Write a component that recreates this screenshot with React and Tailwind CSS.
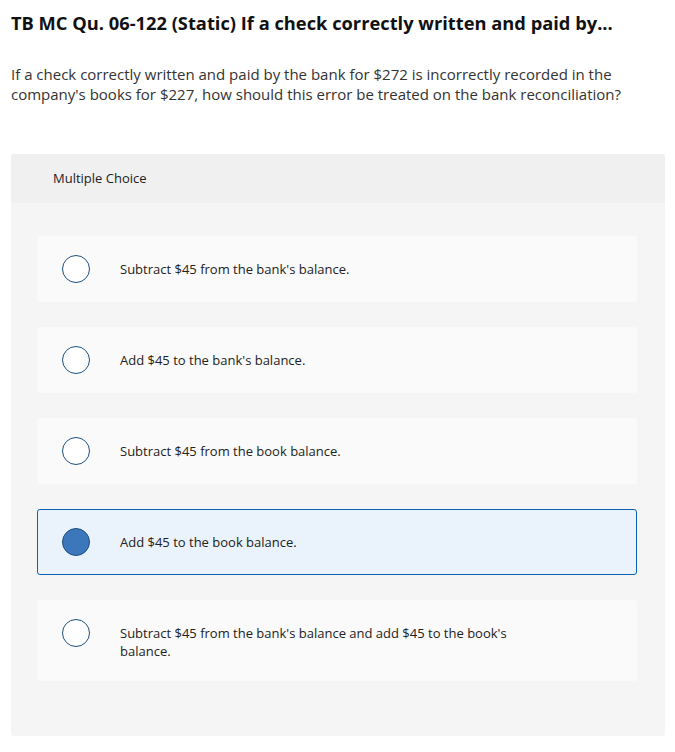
const choices = [
  "Subtract $45 from the bank's balance.",
  "Add $45 to the bank's balance.",
  'Subtract $45 from the book balance.',
  'Add $45 to the book balance.',
  "Subtract $45 from the bank's balance and add $45 to the book's balance.",
];

const selected = 3;

const Choice = ({ text, active }) => (
  <div
    className={`flex items-start rounded-[3px] border pl-[24px] pr-4 py-[18px] ${
      active ? 'border-[#0b62b5] bg-[#eaf2fb]' : 'border-transparent bg-[#fafafa]'
    }`}
  >
    <span
      className={`h-[28px] w-[28px] shrink-0 rounded-full border-[1.5px] border-[#1d4f80] ${
        active ? 'bg-[#3b77ba]' : 'bg-white'
      }`}
    />
    <p className="ml-[30px] max-w-[420px] pt-[5px] pb-[2px] text-[13px] leading-[18px] text-[#222]">{text}</p>
  </div>
);

const App = () => {
  return (
    <div className="min-h-screen bg-white px-[11px] pt-[10px] font-['Open_Sans','Liberation_Sans',sans-serif]">
      <h1 className="text-[18.3px] font-bold leading-[26px] text-[#111]">
        TB MC Qu. 06-122 (Static) If a check correctly written and paid by...
      </h1>
      <p className="mt-[28px] text-[15px] leading-[20px] text-[#333]">
        If a check correctly written and paid by the bank for $272 is incorrectly recorded in the company's books for $227, how should this error be treated on the bank reconciliation?
      </p>

      <div className="mt-[50px] w-[654px] overflow-hidden rounded-[3px] bg-[#f5f5f5]">
        <div className="flex h-[49px] items-center bg-[#f0f0f0] pl-[42px] text-[13px] text-[#222]">
          Multiple Choice
        </div>
        <div className="flex flex-col gap-[25px] pl-[26px] pr-[28px] pt-[33px] pb-[55px]">
          {choices.map((c, i) => (
            <Choice key={i} text={c} active={i === selected} />
          ))}
        </div>
      </div>
    </div>
  );
};

export default App;
